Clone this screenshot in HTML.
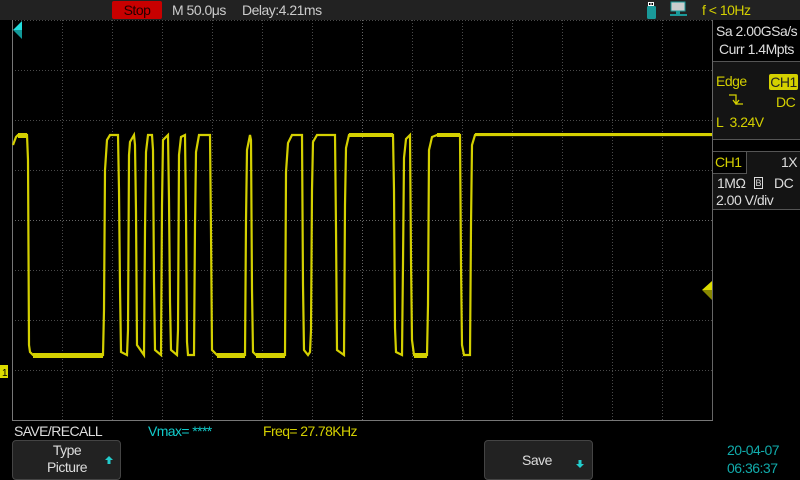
<!DOCTYPE html>
<html><head><meta charset="utf-8"><style>
body{margin:0;width:800px;height:480px;background:#000;overflow:hidden;position:relative;font-family:"Liberation Sans",sans-serif;}
.a{position:absolute;white-space:nowrap;}
</style></head><body>
<div class="a" style="left:0;top:0;width:800px;height:20px;background:#222;"></div>
<div class="a" style="left:112px;top:1px;width:50px;height:18px;background:#c80000;border-radius:2px;color:#200;font-size:14px;line-height:18px;text-align:center;letter-spacing:-0.5px;">Stop</div>
<div class="a" style="left:172px;top:1px;color:#ccc;font-size:14px;line-height:18px;letter-spacing:-0.5px;">M 50.0μs</div>
<div class="a" style="left:242px;top:1px;color:#ccc;font-size:14px;line-height:18px;letter-spacing:-0.5px;">Delay:4.21ms</div>
<svg class="a" style="left:640px;top:0" width="60" height="20">
<rect x="8" y="2" width="6" height="5" fill="#fff"/><rect x="9" y="3" width="1.5" height="2" fill="#000"/><rect x="11.5" y="3" width="1.5" height="2" fill="#000"/>
<rect x="7" y="6" width="9" height="13" rx="1.5" fill="#1a9a9a"/>
<rect x="31" y="2" width="14" height="9" fill="#ccc" stroke="#1a9a9a"/>
<rect x="36" y="11" width="4" height="3" fill="#1a9a9a"/><rect x="30" y="14" width="17" height="2" fill="#1a9a9a"/>
</svg>
<div class="a" style="left:702px;top:1px;color:#d4d000;font-size:14px;line-height:18px;letter-spacing:-0.5px;">f &lt; 10Hz</div>

<svg class="a" style="left:0;top:0" width="800" height="480">
<g stroke="#4a4a4a" stroke-width="1" stroke-dasharray="1,2" fill="none">
<path d="M62.5 20V420M112.5 20V420M162.5 20V420M212.5 20V420M262.5 20V420M312.5 20V420M412.5 20V420M462.5 20V420M512.5 20V420M562.5 20V420M612.5 20V420M662.5 20V420"/>
<path d="M12 20.5H712M12 70.5H712M12 120.5H712M12 170.5H712M12 270.5H712M12 320.5H712M12 370.5H712"/>
</g>
<g stroke="#666" stroke-width="1" stroke-dasharray="1,2" fill="none">
<path d="M362.5 20V420M12 220.5H712"/>
</g>
<path d="M12.5 20V420.5H712.5V20" stroke="#777" stroke-width="1" fill="none"/>
<path d="M13,145 L16,137 L18,135 L27,135 L28,160 L29,345 L30,352 L33,355 L103,355 L104,310 L105,170 L107,140 L110,135 L118,135 L119,190 L120,287 L121,352 L127,355 L128,330 L129,155 L130,142 L134,135 L135,145 L136,212 L137,345 L144,355 L145,230 L146,152 L148,135 L152,135 L153,150 L154,282 L155,350 L161,355 L162,205 L163,140 L168,135 L169,200 L170,302 L171,350 L177,355 L178,330 L179,155 L181,137 L185,135 L186,215 L187,342 L188,355 L194,355 L195,225 L196,152 L199,135 L210,135 L211,233 L212,350 L217,355 L245,355 L246,220 L247,150 L250,135 L251,140 L252,290 L253,352 L256,355 L285,355 L286,172 L288,143 L292,135 L302,135 L303,285 L304,350 L308,355 L310,352 L311,330 L312,190 L313,142 L317,135 L335,135 L336,228 L337,350 L344,355 L345,205 L346,148 L349,135 L393,135 L394,190 L395,328 L396,352 L402,355 L403,263 L404,158 L406,139 L410,135 L411,260 L412,340 L414,355 L427,355 L428,305 L429,150 L432,137 L437,135 L460,135 L461,265 L462,345 L464,355 L470,355 L471,225 L472,145 L475,135 L712,135" stroke="#d4d000" stroke-width="2.2" fill="none"/>
<g fill="#d4d000"><rect x="18" y="133" width="9" height="5"/><rect x="33" y="353" width="70" height="5"/><rect x="475" y="133" width="237" height="3"/><rect x="217" y="353" width="28" height="5"/><rect x="256" y="353" width="29" height="5"/><rect x="349" y="133" width="44" height="4"/><rect x="414" y="353" width="13" height="5"/><rect x="437" y="133" width="23" height="4"/></g>
<polygon points="22,21 13,30 22,30" fill="#2dd"/><polygon points="13,30 22,30 22,39" fill="#199"/>
<polygon points="712,281 702,290 712,290" fill="#dd0"/><polygon points="702,290 712,290 712,300" fill="#880"/>
<rect x="0" y="365" width="8" height="13" fill="#dd0"/><text x="2" y="376" font-size="10" fill="#000" font-family="Liberation Sans">1</text>
</svg>

<div class="a" style="left:716px;top:23px;color:#ddd;font-size:14px;letter-spacing:-0.5px;">Sa 2.00GSa/s</div>
<div class="a" style="left:719px;top:41px;color:#ddd;font-size:14px;letter-spacing:-0.5px;">Curr 1.4Mpts</div>
<div class="a" style="left:713px;top:61px;width:87px;height:79px;background:#141414;border-top:1px solid #555;border-bottom:1px solid #555;box-sizing:border-box;"></div>
<div class="a" style="left:716px;top:73px;color:#d4d000;font-size:14px;letter-spacing:-0.5px;">Edge</div>
<div class="a" style="left:769px;top:74px;width:29px;height:16px;background:#d4d000;border-radius:2px;color:#222;font-size:14px;line-height:16px;text-align:center;letter-spacing:-0.5px;">CH1</div>
<svg class="a" style="left:728px;top:93px" width="16" height="14"><path d="M1 2H8V11H15M5 7L8 11L11 7" stroke="#d4d000" stroke-width="1.3" fill="none"/></svg>
<div class="a" style="left:776px;top:94px;color:#d4d000;font-size:14px;letter-spacing:-0.5px;">DC</div>
<div class="a" style="left:716px;top:114px;color:#d4d000;font-size:14px;letter-spacing:-0.5px;">L &nbsp;3.24V</div>
<div class="a" style="left:713px;top:151px;width:87px;height:59px;background:#141414;border-top:1px solid #555;border-bottom:1px solid #555;box-sizing:border-box;"></div>
<div class="a" style="left:713px;top:152px;width:33px;height:21px;background:#000;border-right:1px solid #555;border-bottom:1px solid #555;"></div>
<div class="a" style="left:715px;top:154px;color:#d4d000;font-size:14px;letter-spacing:-0.5px;">CH1</div>
<div class="a" style="left:781px;top:154px;color:#ddd;font-size:14px;letter-spacing:-0.5px;">1X</div>
<div class="a" style="left:717px;top:175px;color:#ddd;font-size:14px;letter-spacing:-0.5px;">1MΩ</div>
<div class="a" style="left:754px;top:177px;width:7px;height:10px;border:1px solid #ddd;color:#ddd;font-size:9px;line-height:10px;text-align:center;">B</div>
<div class="a" style="left:774px;top:175px;color:#ddd;font-size:14px;letter-spacing:-0.5px;">DC</div>
<div class="a" style="left:716px;top:192px;color:#ddd;font-size:14px;letter-spacing:-0.5px;">2.00 V/div</div>
<div class="a" style="left:712px;top:20px;width:1px;height:400px;background:#666;"></div>

<div class="a" style="left:14px;top:423px;color:#ddd;font-size:14px;letter-spacing:-0.6px;">SAVE/RECALL</div>
<div class="a" style="left:148px;top:423px;color:#1cc;font-size:14px;letter-spacing:-0.6px;">Vmax= ****</div>
<div class="a" style="left:263px;top:423px;color:#d4d000;font-size:14px;letter-spacing:-0.6px;">Freq= 27.78KHz</div>
<div class="a" style="left:12px;top:440px;width:107px;height:38px;background:#222;border:1px solid #444;border-radius:4px;"></div>
<div class="a" style="left:32px;top:442px;width:70px;color:#ddd;font-size:14px;line-height:17px;text-align:center;letter-spacing:-0.5px;">Type<br>Picture</div>
<svg class="a" style="left:105px;top:456px" width="8" height="9"><path d="M4 0L8 4H5.5V8H2.5V4H0Z" fill="#2cc"/></svg>
<div class="a" style="left:484px;top:440px;width:107px;height:38px;background:#222;border:1px solid #444;border-radius:4px;"></div>
<div class="a" style="left:522px;top:452px;color:#ddd;font-size:14px;letter-spacing:-0.5px;">Save</div>
<svg class="a" style="left:576px;top:460px" width="8" height="9"><path d="M4 8L8 4H5.5V0H2.5V4H0Z" fill="#2cc"/></svg>
<div class="a" style="left:727px;top:442px;color:#1aa;font-size:14px;letter-spacing:-0.5px;">20-04-07</div>
<div class="a" style="left:727px;top:460px;color:#1aa;font-size:14px;letter-spacing:-0.5px;">06:36:37</div>
</body></html>
